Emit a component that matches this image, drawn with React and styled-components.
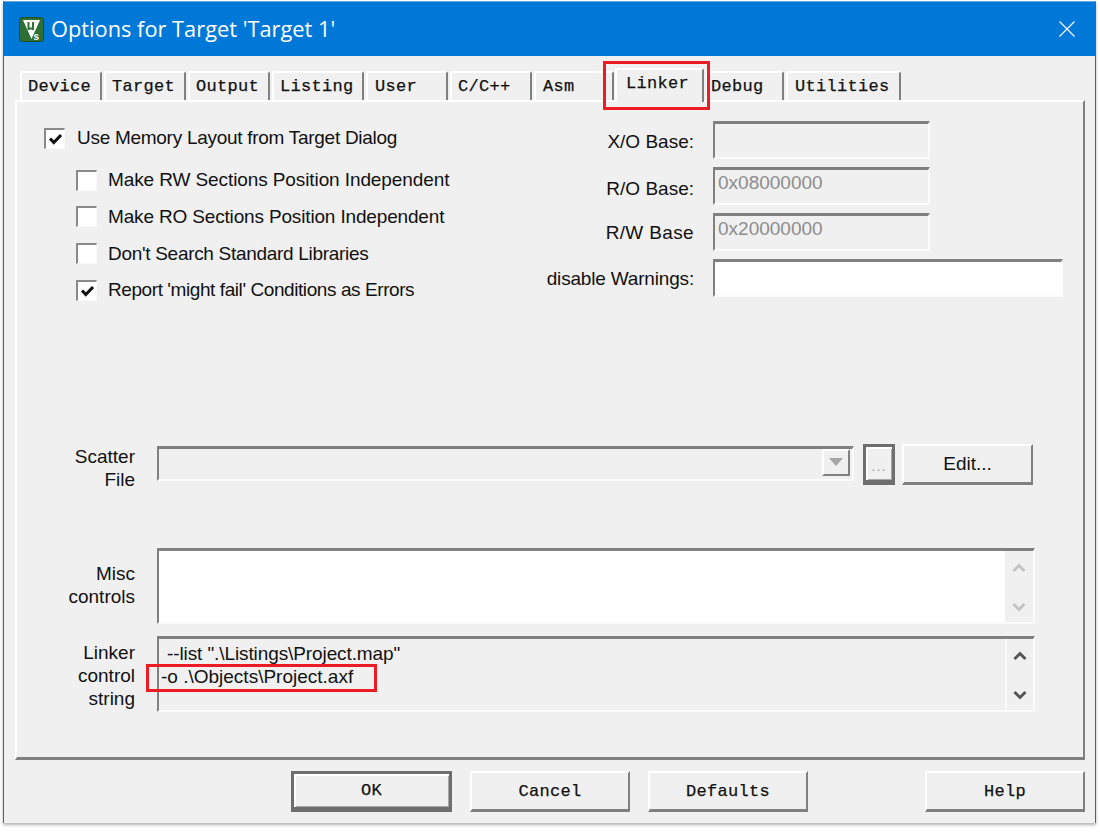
import React from "react";
import styled, { createGlobalStyle } from "styled-components";

const GlobalStyle = createGlobalStyle`
  html, body {
    margin: 0;
    padding: 0;
    background: #ffffff;
  }
`;

const UI_FONT = `"Liberation Sans", Arial, sans-serif`;
const FIXED_FONT = `"Liberation Mono", "Courier New", monospace`;

const Screen = styled.div`
  width: 1100px;
  height: 836px;
  overflow: hidden;
  padding: 1px 0 0 3px;
  box-sizing: border-box;
`;

const Window = styled.div`
  width: 1093px;
  height: 822px;
  box-sizing: border-box;
  background: #f0f0f0;
  border: 1px solid #0078d7;
  border-top: 1px solid #6aa9df;
  border-bottom: none;
  box-shadow: 0 2px 3px rgba(0, 0, 0, 0.3);
  display: flex;
  flex-direction: column;
  color: #111111;
  font-family: ${UI_FONT};
`;

const TitleBar = styled.div`
  height: 54px;
  flex: none;
  background: #0078d7;
  display: flex;
  align-items: center;
  padding: 0 20px 0 15px;
  color: #ffffff;
`;

const Title = styled.div`
  flex: 1;
  margin-left: 7px;
  font-family: "Open Sans", "Noto Sans", sans-serif;
  font-size: 21.8px;
  line-height: 28px;
  white-space: nowrap;
`;

const Tabs = styled.div`
  display: flex;
  align-items: flex-end;
  height: 44px;
  flex: none;
  padding-left: 16px;
`;

const Tab = styled.div`
  position: relative;
  box-sizing: border-box;
  width: ${p => p.$w}px;
  height: ${p => (p.$active ? 34 : 29)}px;
  margin-right: ${p => p.$gap ?? 2}px;
  margin-bottom: ${p => (p.$active ? -2 : 0)}px;
  padding: 3px 0 0 ${p => p.$pad ?? 6}px;
  background: #f0f0f0;
  border-top: 2px solid #ffffff;
  border-left: 2px solid #ffffff;
  border-right: 2px solid #808080;
  border-radius: 2px 2px 0 0;
  font-family: ${FIXED_FONT};
  font-size: 17px;
  line-height: 22px;
  letter-spacing: 0.3px;
  -webkit-text-stroke: 0.25px #111111;
  white-space: nowrap;
  z-index: ${p => (p.$active ? 2 : 0)};
`;

const TabMark = styled.div`
  position: absolute;
  left: -14px;
  top: -9px;
  width: 107px;
  height: 49px;
  box-sizing: border-box;
  border: 3px solid #ed1c24;
`;

const Panel = styled.div`
  width: 1070px;
  height: 660px;
  flex: none;
  margin-left: 11px;
  box-sizing: border-box;
  border-top: 2px solid #ffffff;
  border-left: 2px solid #ffffff;
  border-right: 2px solid #808080;
  border-bottom: 3px solid #808080;
`;

const TopRow = styled.div`
  display: flex;
  justify-content: space-between;
  padding: 19px 20px 0 27px;
`;

const Checks = styled.div`
  padding-top: 7px;
`;

const SubChecks = styled.div`
  display: grid;
  grid-auto-rows: 36.67px;
  margin: 14px 0 0 32px;
`;

const CheckRow = styled.label`
  display: flex;
  align-items: center;
  gap: ${p => p.$gap ?? 12}px;
  height: 20px;
  font-size: 19px;
  line-height: 20px;
  letter-spacing: ${p => p.$track ?? 0}px;
  white-space: nowrap;
`;

const SubRow = styled(CheckRow)`
  height: 36.67px;
`;

const CheckBox = styled.span`
  width: 21px;
  height: 21px;
  flex: none;
  box-sizing: border-box;
  background: #ffffff;
  border-top: 2px solid #8a8a8a;
  border-left: 2px solid #8a8a8a;
  border-right: 1px solid #f8f8f8;
  border-bottom: 1px solid #f8f8f8;
  display: flex;
  align-items: center;
  justify-content: center;
`;

const Fields = styled.div`
  display: grid;
  grid-template-columns: max-content 350px;
  grid-auto-rows: 38px;
  row-gap: 8px;
  column-gap: 19px;
  align-items: center;
`;

const FieldLabel = styled.div`
  padding-top: ${p => p.$pad ?? 4}px;
  text-align: right;
  font-size: 19px;
  line-height: 22px;
  letter-spacing: ${p => p.$track ?? 0}px;
  white-space: nowrap;
`;

const Sunken = styled.div`
  box-sizing: border-box;
  border-top: 3px solid #808080;
  border-left: 2px solid #808080;
  border-right: 2px solid #fbfbfb;
  border-bottom: 2px solid #fbfbfb;
  background: ${p => (p.$white ? "#ffffff" : "#f0f0f0")};
`;

const FieldInput = styled(Sunken)`
  width: ${p => p.$w}px;
  height: 38px;
  padding: 2px 0 0 3px;
  color: #8d8d8d;
  font-size: 19px;
  line-height: 22px;
`;

const FormRow = styled.div`
  display: grid;
  grid-template-columns: 118px 1fr;
  column-gap: 22px;
  height: ${p => p.$h}px;
  margin-top: ${p => p.$top}px;
`;

const RowLabel = styled.div`
  padding-top: ${p => p.$pad}px;
  text-align: right;
  font-size: 19px;
  line-height: 23px;
`;

const ScatterControls = styled.div`
  display: flex;
  align-items: flex-start;
`;

const Combo = styled(Sunken)`
  width: 697px;
  height: 35px;
  margin-top: 2px;
  display: flex;
  justify-content: flex-end;
  padding-right: 2px;
`;

const ComboButton = styled.div`
  width: 28px;
  height: 27px;
  box-sizing: border-box;
  border-top: 2px solid #ffffff;
  border-left: 2px solid #ffffff;
  border-right: 2px solid #808080;
  border-bottom: 2px solid #808080;
  display: flex;
  align-items: center;
  justify-content: center;
`;

const RaisedButton = styled.div`
  box-sizing: border-box;
  width: ${p => p.$w}px;
  height: 41px;
  margin-left: ${p => p.$left ?? 0}px;
  flex: none;
  display: flex;
  align-items: center;
  justify-content: center;
  background: #f0f0f0;
  border-top: 2px solid #ffffff;
  border-left: 2px solid #ffffff;
  border-right: 2px solid #808080;
  border-bottom: 3px solid #808080;
`;

const DefaultButton = styled(RaisedButton)`
  border: 3px solid #6e6e6e;
  border-bottom-width: 5px;
  box-shadow: inset 2px 2px 0 #ffffff, inset -1px -1px 0 #a8a8a8;
`;

const EditLabel = styled.span`
  font-size: 19px;
`;

const DotsLabel = styled.span`
  color: #a8a8a8;
  font-size: 15px;
  letter-spacing: 1px;
  padding-top: 4px;
`;

const TextArea = styled(Sunken)`
  width: 878px;
  height: 76px;
  display: flex;
  background: #f0f0f0;
`;

const AreaBody = styled.div`
  flex: 1;
  position: relative;
  background: ${p => (p.$white ? "#ffffff" : "transparent")};
  padding: 3px 0 0 2px;
  font-size: 19px;
  line-height: 23px;
  white-space: pre;
`;

const ScrollBar = styled.div`
  width: 28px;
  flex: none;
  box-sizing: border-box;
  display: flex;
  flex-direction: column;
  justify-content: space-between;
  align-items: center;
  padding: 12px 0 10px;
  border-left: ${p => (p.$line ? "2px solid #fafafa" : "none")};
`;

const TextLine = styled.div`
  position: relative;
  padding-left: ${p => p.$pad}px;
  letter-spacing: ${p => p.$track ?? 0}px;
`;

const LineMark = styled.div`
  position: absolute;
  left: -15px;
  top: -1px;
  width: 231px;
  height: 28px;
  box-sizing: border-box;
  border: 3px solid #ed1c24;
`;

const Footer = styled.div`
  display: flex;
  padding: 11px 0 0 287px;
`;

const FixedLabel = styled.span`
  font-family: ${FIXED_FONT};
  font-size: 17px;
  letter-spacing: 0.3px;
  -webkit-text-stroke: 0.25px #111111;
`;

const Tick = () => (
  <svg width="15" height="14" viewBox="0 0 15 14">
    <path d="M2 6.5 L5.8 10.5 L13 3" fill="none" stroke="#111" strokeWidth="3" />
  </svg>
);

const Chevron = ({ up, color }) => (
  <svg width="14" height="10" viewBox="0 0 14 10">
    <path
      d={up ? "M1.5 8 L7 2.5 L12.5 8" : "M1.5 2 L7 7.5 L12.5 2"}
      fill="none"
      stroke={color}
      strokeWidth="3"
    />
  </svg>
);

const Logo = () => (
  <svg width="25" height="25" viewBox="0 0 25 25">
    <rect x="0.5" y="0.5" width="24" height="24" rx="3" fill="#2f6f34" stroke="#1f4f24" />
    <path d="M4 3 H21 L12.5 22 Z" fill="#ffffff" />
    <path d="M9.5 5 V13 M9.5 11.5 H14 M14 5 V13" fill="none" stroke="#2f6f34" strokeWidth="2" />
    <text x="14.5" y="22.5" fontSize="10" fontWeight="700" fontFamily="Liberation Sans, sans-serif" fill="#ffffff">s</text>
  </svg>
);

const CloseIcon = () => (
  <svg width="16" height="16" viewBox="0 0 16 16">
    <path d="M0.5 0.5 L15.5 15.5 M15.5 0.5 L0.5 15.5" stroke="#ffffff" strokeWidth="1.1" />
  </svg>
);

const TABS = [
  { name: "Device", w: 82 },
  { name: "Target", w: 82 },
  { name: "Output", w: 82 },
  { name: "Listing", w: 92 },
  { name: "User", w: 82, pad: 7 },
  { name: "C/C++", w: 82 },
  { name: "Asm", w: 80, gap: 1, pad: 7 },
  { name: "Linker", w: 89, active: true, pad: 9 },
  { name: "Debug", w: 78, pad: 3 },
  { name: "Utilities", w: 115, pad: 7 },
];

const SUB_CHECKS = [
  { text: "Make RW Sections Position Independent", track: -0.1 },
  { text: "Make RO Sections Position Independent", track: -0.16 },
  { text: "Don't Search Standard Libraries", track: -0.3 },
  { text: "Report 'might fail' Conditions as Errors", track: -0.42, checked: true },
];

const App = () => (
  <Screen>
    <GlobalStyle />
    <Window>
      <TitleBar>
        <Logo />
        <Title>Options for Target 'Target 1'</Title>
        <CloseIcon />
      </TitleBar>
      <Tabs>
        {TABS.map(t => (
          <Tab key={t.name} $w={t.w} $gap={t.gap} $pad={t.pad} $active={t.active}>
            {t.name}
            {t.active && <TabMark />}
          </Tab>
        ))}
      </Tabs>
      <Panel>
        <TopRow>
          <Checks>
            <CheckRow $track={-0.28}>
              <CheckBox><Tick /></CheckBox>
              Use Memory Layout from Target Dialog
            </CheckRow>
            <SubChecks>
              {SUB_CHECKS.map(c => (
                <SubRow key={c.text} $gap={11} $track={c.track}>
                  <CheckBox>{c.checked && <Tick />}</CheckBox>
                  {c.text}
                </SubRow>
              ))}
            </SubChecks>
          </Checks>
          <Fields>
            <FieldLabel>X/O Base:</FieldLabel>
            <FieldInput $w={217} />
            <FieldLabel $pad={6}>R/O Base:</FieldLabel>
            <FieldInput $w={217}>0x08000000</FieldInput>
            <FieldLabel $pad={2} $track={0.35}>R/W Base</FieldLabel>
            <FieldInput $w={217}>0x20000000</FieldInput>
            <FieldLabel $pad={2} $track={-0.18}>disable Warnings:</FieldLabel>
            <FieldInput $w={350} $white />
          </Fields>
        </TopRow>

        <FormRow $h={41} $top={135.3}>
          <RowLabel $pad={1}>Scatter<br />File</RowLabel>
          <ScatterControls>
            <Combo>
              <ComboButton>
                <svg width="14" height="8" viewBox="0 0 14 8">
                  <path d="M0 0 H14 L7 8 Z" fill="#a6a6a6" />
                </svg>
              </ComboButton>
            </Combo>
            <DefaultButton $w={32} $left={9}><DotsLabel>...</DotsLabel></DefaultButton>
            <RaisedButton $w={131} $left={7}><EditLabel>Edit...</EditLabel></RaisedButton>
          </ScatterControls>
        </FormRow>

        <FormRow $h={76} $top={63}>
          <RowLabel $pad={14}>Misc<br />controls</RowLabel>
          <TextArea>
            <AreaBody $white />
            <ScrollBar>
              <Chevron up color="#c4c4c4" />
              <Chevron color="#c4c4c4" />
            </ScrollBar>
          </TextArea>
        </FormRow>

        <FormRow $h={76} $top={12}>
          <RowLabel $pad={5}>Linker<br />control<br />string</RowLabel>
          <TextArea>
            <AreaBody>
              <TextLine $pad={6} $track={-0.1}>--list ".\Listings\Project.map"</TextLine>
              <TextLine $pad={0}>
                -o .\Objects\Project.axf
                <LineMark />
              </TextLine>
            </AreaBody>
            <ScrollBar $line>
              <Chevron up color="#555555" />
              <Chevron color="#555555" />
            </ScrollBar>
          </TextArea>
        </FormRow>
      </Panel>
      <Footer>
        <DefaultButton $w={161}><FixedLabel>OK</FixedLabel></DefaultButton>
        <RaisedButton $w={160} $left={18}><FixedLabel>Cancel</FixedLabel></RaisedButton>
        <RaisedButton $w={160} $left={18}><FixedLabel>Defaults</FixedLabel></RaisedButton>
        <RaisedButton $w={160} $left={117}><FixedLabel>Help</FixedLabel></RaisedButton>
      </Footer>
    </Window>
  </Screen>
);

export default App;
